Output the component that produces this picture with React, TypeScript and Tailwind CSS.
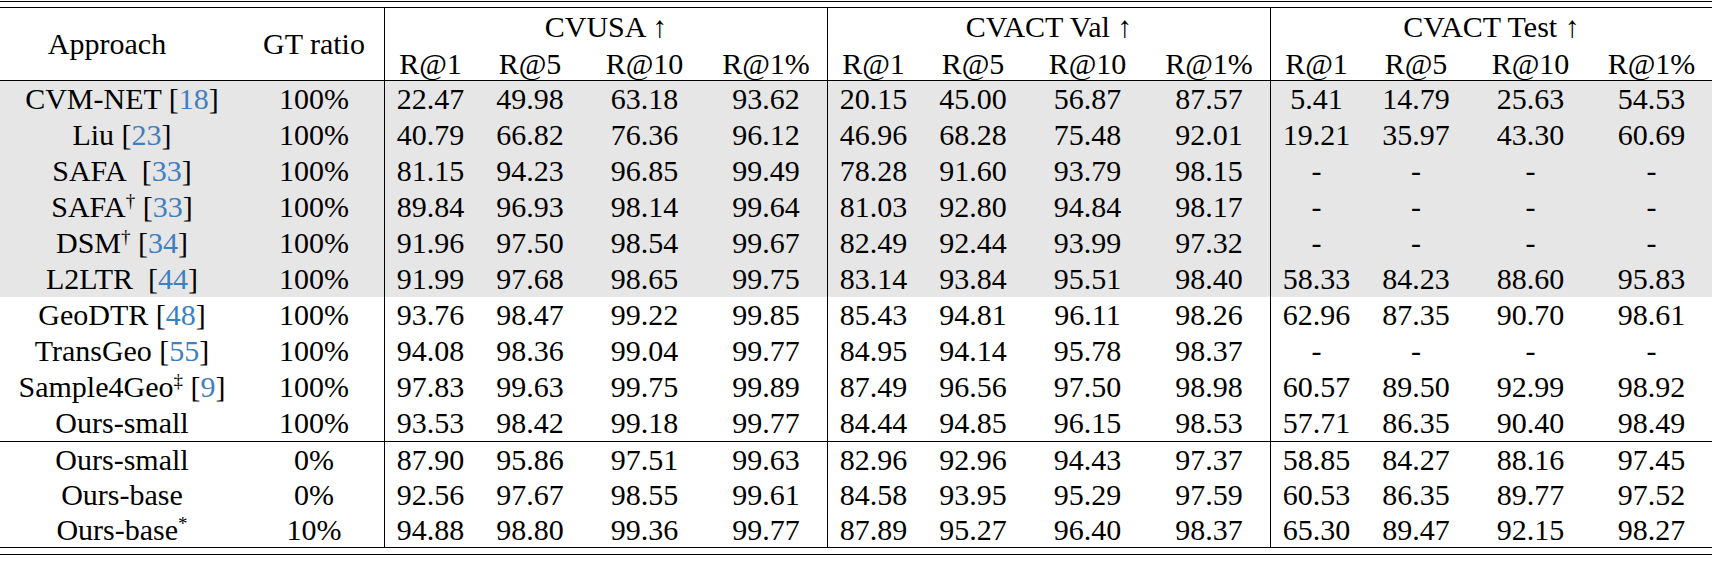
import React from "react";

type Row = { name: React.ReactNode; gt: string; v: string[] };

const Cite = ({ n }: { n: string }) => (
  <>
    [<span className="text-[#3f7fbf]">{n}</span>]
  </>
);

const Sup = ({ c }: { c: string }) => (
  <sup className="text-[19px] relative top-[-10px]">{c}</sup>
);

const sec1: Row[] = [
  { name: <>CVM-NET <Cite n="18" /></>, gt: "100%", v: ["22.47", "49.98", "63.18", "93.62", "20.15", "45.00", "56.87", "87.57", "5.41", "14.79", "25.63", "54.53"] },
  { name: <>Liu <Cite n="23" /></>, gt: "100%", v: ["40.79", "66.82", "76.36", "96.12", "46.96", "68.28", "75.48", "92.01", "19.21", "35.97", "43.30", "60.69"] },
  { name: <>SAFA&nbsp; <Cite n="33" /></>, gt: "100%", v: ["81.15", "94.23", "96.85", "99.49", "78.28", "91.60", "93.79", "98.15", "-", "-", "-", "-"] },
  { name: <>SAFA<Sup c="†" />&nbsp;<Cite n="33" /></>, gt: "100%", v: ["89.84", "96.93", "98.14", "99.64", "81.03", "92.80", "94.84", "98.17", "-", "-", "-", "-"] },
  { name: <>DSM<Sup c="†" />&nbsp;<Cite n="34" /></>, gt: "100%", v: ["91.96", "97.50", "98.54", "99.67", "82.49", "92.44", "93.99", "97.32", "-", "-", "-", "-"] },
  { name: <>L2LTR&nbsp; <Cite n="44" /></>, gt: "100%", v: ["91.99", "97.68", "98.65", "99.75", "83.14", "93.84", "95.51", "98.40", "58.33", "84.23", "88.60", "95.83"] },
  { name: <>GeoDTR <Cite n="48" /></>, gt: "100%", v: ["93.76", "98.47", "99.22", "99.85", "85.43", "94.81", "96.11", "98.26", "62.96", "87.35", "90.70", "98.61"] },
  { name: <>TransGeo <Cite n="55" /></>, gt: "100%", v: ["94.08", "98.36", "99.04", "99.77", "84.95", "94.14", "95.78", "98.37", "-", "-", "-", "-"] },
  { name: <>Sample4Geo<Sup c="‡" />&nbsp;<Cite n="9" /></>, gt: "100%", v: ["97.83", "99.63", "99.75", "99.89", "87.49", "96.56", "97.50", "98.98", "60.57", "89.50", "92.99", "98.92"] },
  { name: <>Ours-small</>, gt: "100%", v: ["93.53", "98.42", "99.18", "99.77", "84.44", "94.85", "96.15", "98.53", "57.71", "86.35", "90.40", "98.49"] },
];

const sec2: Row[] = [
  { name: <>Ours-small</>, gt: "0%", v: ["87.90", "95.86", "97.51", "99.63", "82.96", "92.96", "94.43", "97.37", "58.85", "84.27", "88.16", "97.45"] },
  { name: <>Ours-base</>, gt: "0%", v: ["92.56", "97.67", "98.55", "99.61", "84.58", "93.95", "95.29", "97.59", "60.53", "86.35", "89.77", "97.52"] },
  { name: <>Ours-base<Sup c="*" /></>, gt: "10%", v: ["94.88", "98.80", "99.36", "99.77", "87.89", "95.27", "96.40", "98.37", "65.30", "89.47", "92.15", "98.27"] },
];

const cols =
  "grid grid-cols-[244px_140px_92px_108px_121px_122px_92px_108px_121px_122px_92px_108px_121px_121px]";

const cell = "flex items-center justify-center whitespace-nowrap";

function DataRow({ r, gray, h }: { r: Row; gray: boolean; h: string }) {
  const bg = gray ? "bg-[#e6e6e6]" : "";
  return (
    <div className={`${cols} ${h} ${bg}`}>
      <div className={cell}>
        <span>{r.name}</span>
      </div>
      <div className={cell}>
        <span>{r.gt}</span>
      </div>
      {r.v.map((x, i) => (
        <div key={i} className={`${cell} ${i % 4 === 0 ? "border-l border-black" : ""}`}>
          <span>{x}</span>
        </div>
      ))}
    </div>
  );
}

export default function App() {
  const heads = ["R@1", "R@5", "R@10", "R@1%"];
  const groups = ["CVUSA ↑", "CVACT Val ↑", "CVACT Test ↑"];
  return (
    <div className="w-[1717px] h-[562px] bg-white pt-[1px] text-black text-[30px] leading-none font-['Liberation_Serif','Times_New_Roman',serif]">
      <div className="w-[1712px]">
        <div className="h-[7px] border-y border-black" />
        <div className={`${cols} grid-rows-[36px_36px] border-b border-black`}>
          <div className={`${cell} row-span-2 pr-[30px]`}>
            <span>Approach</span>
          </div>
          <div className={`${cell} row-span-2`}>
            <span>GT ratio</span>
          </div>
          {groups.map((g) => (
            <div key={g} className={`${cell} col-span-4 border-l border-black pt-[2px]`}>
              <span>{g}</span>
            </div>
          ))}
          {groups.map((g) =>
            heads.map((h, i) => (
              <div key={g + h} className={`${cell} ${i === 0 ? "border-l border-black" : ""} pt-[4px]`}>
                <span>{h}</span>
              </div>
            ))
          )}
        </div>
        <div className="border-b border-black">
          {sec1.map((r, i) => (
            <DataRow key={i} r={r} gray={i < 6} h="h-[36px]" />
          ))}
        </div>
        <div>
          {sec2.map((r, i) => (
            <DataRow key={i} r={r} gray={false} h="h-[35px]" />
          ))}
        </div>
        <div className="h-[8px] border-y border-black" />
      </div>
    </div>
  );
}
